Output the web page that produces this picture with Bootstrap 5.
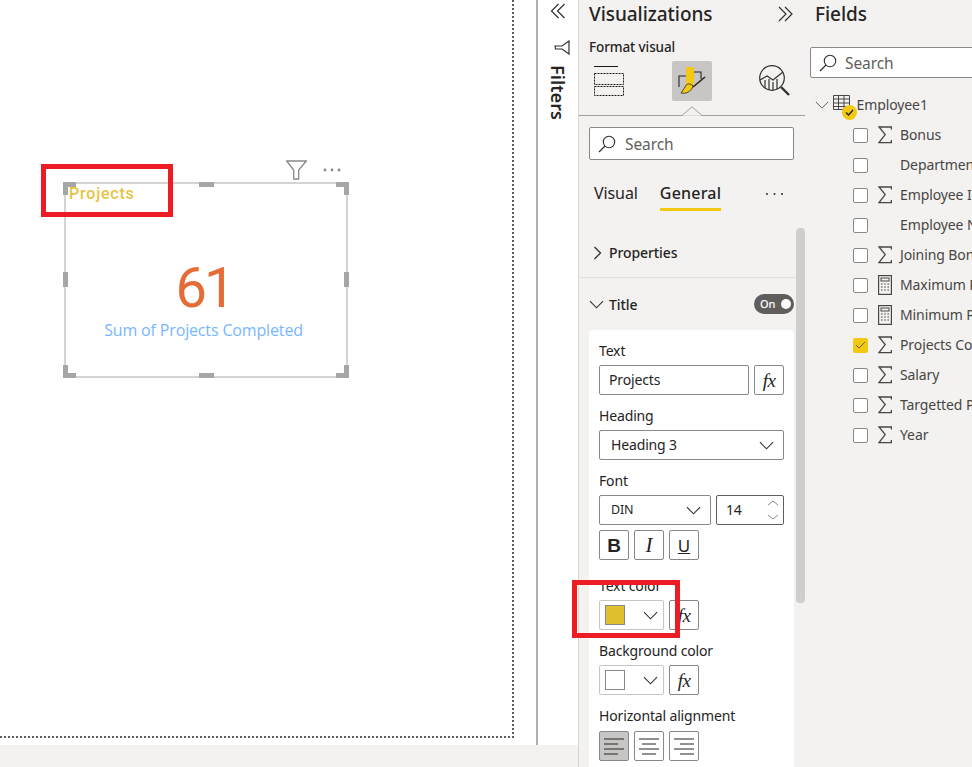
<!DOCTYPE html>
<html lang="en">
<head>
<meta charset="utf-8">
<title>Power BI format visual</title>
<link href="https://cdn.jsdelivr.net/npm/bootstrap@5.3.0/dist/css/bootstrap.min.css" rel="stylesheet">
<style>
html,body{height:767px;overflow:hidden;background:#fff}
body{font-family:"Noto Sans","Open Sans","Liberation Sans",sans-serif;font-size:14px;color:#252423}
.pbi-root{width:972px;height:767px}
.pbi-left{width:578px}
.pbi-main{height:745px}
.pbi-canvas{width:536px;background:#fff;flex:none}
.pbi-page{position:absolute;left:0;top:0;width:514px;height:738px;border-right:2px dotted #605e5c;border-bottom:2px dotted #605e5c}
.pbi-foot{height:22px;background:#f3f2f1}
.pbi-filter{width:42px;border-left:2px solid #b3b0ad;background:#fff;padding-top:3px}
.pbi-filter-label{writing-mode:vertical-rl;font-size:18px;font-weight:600;line-height:20px;margin-top:10px;letter-spacing:.1px}
.pbi-viz{width:227px;flex:none;background:#f3f2f1;border-left:1px solid #d8d6d4;position:relative;overflow:hidden}
.pbi-viz>*{flex:none}
.pbi-fields{width:167px;flex:none;background:#f3f2f1;overflow:hidden}
.pbi-h{font-size:19px;font-weight:500;line-height:28px;height:28px;letter-spacing:-.05px}
.pbi-viz-head{padding:0 11px 0 10px}
.pbi-fmt{padding:0 10px;height:20px;line-height:20px;margin-top:9px;font-size:13.5px;font-weight:500;letter-spacing:-.1px}
.pbi-tabs{height:59px;border-bottom:1px solid #a19f9d;padding:4px 0 0 0;position:relative}
.pbi-tab-sel{width:40px;height:40px;background:#c8c6c4;border-radius:2px}
.pbi-caret{position:absolute;left:102px;bottom:-1px;display:block}
.pbi-search{width:auto;height:33px;padding:0 8px!important;border:1px solid #8a8886;border-radius:2px;background:#fff;font-size:15.5px;color:#605e5c;line-height:1;letter-spacing:-.1px}
.pbi-search span{padding-top:2px}
.pbi-search-viz{margin:11px 11px 0 10px;gap:9px}
.pbi-subtabs{height:33px;margin-top:18px;padding:0 11px 0 15px;font-size:16px;line-height:30px;letter-spacing:-.1px}
.pbi-subtab-on{height:33px;border-bottom:3px solid #f2c811;font-weight:500;letter-spacing:.2px}
.pbi-more{margin-top:14px;margin-right:10px}
.pbi-prop{height:50px;margin-top:17px;padding:0 10px;border-bottom:1px solid #e1dfdd;font-size:14px;font-weight:500;letter-spacing:-.1px}
.pbi-title-row{height:52px;padding:0 11px 0 10px;font-size:14px;font-weight:500;letter-spacing:-.1px}
.pbi-toggle{width:40px;height:20px;background:#605e5c;border-radius:10px;color:#fff;font-size:11px;padding:0 3px 0 6px}
.pbi-knob{width:10px;height:10px;border-radius:50%;background:#fff}
.pbi-panel{margin:0 11px 0 10px;background:#fff;border-radius:4px 4px 0 0;padding:11px 10px 0 10px;height:450px}
.pbi-lbl{height:20px;line-height:20px;font-size:14px;margin-bottom:4px;letter-spacing:-.15px}
.pbi-grp{margin-bottom:11px}
.pbi-ctl{width:auto;height:30px;border:1px solid #8a8886;border-radius:2px;background:#fff;font-size:14px;padding:0 9px!important;line-height:1;color:#252423;letter-spacing:-.15px}
.pbi-ctl-soft{border-color:#c8c6c4;padding:0 5px 0 5px!important}
.pbi-sq{width:30px;height:30px;padding:0;border:1px solid #8a8886;border-radius:2px;background:#fff;color:#252423;line-height:1;flex:none}
.pbi-sq.pbi-on{background:#c8c6c4}
.pbi-fx{font-family:"Liberation Serif",serif;font-style:italic;font-size:19px;letter-spacing:-.5px}
.pbi-swatch{width:20px;height:20px;border:1px solid #8a8886}
.pbi-sb{position:absolute;left:217px;top:228px;width:9px;height:375px;background:#cfcecd;border-radius:4px}
.pbi-visual{position:absolute;left:64px;top:182px;width:284px;height:196px;border:2px solid #d4d4d4}
.pbi-vtitle{position:absolute;left:3px;top:0;font-family:Roboto,sans-serif;font-size:16px;font-weight:500;color:#e8c33f;letter-spacing:.8px;line-height:20px}
.pbi-val{font-family:Roboto,sans-serif;font-weight:400;font-size:56px;line-height:56px;color:#e66c37;letter-spacing:-3px;margin:76px 4px 0 0}
.pbi-cap{font-size:16px;line-height:22px;color:#77b7ff;margin:3px 5px 0 0;letter-spacing:-.15px;font-family:"Open Sans",sans-serif}
.pbi-hd{position:absolute;background:#a6a6a6}
.pbi-vicons{position:absolute;left:286px;top:160px}
.pbi-red{position:absolute;border:5px solid #ed1c24;pointer-events:none}
.pbi-red1{left:41px;top:164px;width:132px;height:53px}
.pbi-red2{left:572px;top:580px;width:108px;height:58px}
.pbi-fsearch{margin:19px 0 0 5px;width:180px;height:31px;flex:none}
.pbi-tree{margin-top:12px;font-size:14px;line-height:20px;color:#484644;letter-spacing:-.1px}
.pbi-row{height:30px;padding-left:48px;white-space:nowrap}
.pbi-cb{width:15px;height:15px;border:1px solid #8a8886;border-radius:2px;background:#fff;flex:none}
.pbi-cb.pbi-on{background:#f2c811;border-color:#f2c811}
.pbi-ico{width:14px;margin-left:10px;margin-right:8px;flex:none;display:block}
.pbi-head{height:30px;padding-left:10px}
.pbi-tblbox{position:relative;width:25px;height:26px;margin-left:4px;flex:none}
.pbi-tick{position:absolute;left:9px;top:13px;width:15px;height:15px;border-radius:50%;background:#f2c811}
</style>
</head>
<body>
<svg width="0" height="0" class="d-block position-absolute">
<symbol id="s-sigma" viewBox="0 0 14 18"><path d="M13.4 3.6V1H1l6.2 7.6L1 16.6h12.4V14" fill="none" stroke="#484644" stroke-width="1.3"/></symbol>
<symbol id="s-calc" viewBox="0 0 14 20"><rect x=".6" y=".6" width="12.8" height="18.8" fill="none" stroke="#484644" stroke-width="1.2"/><rect x="3" y="3" width="8" height="3" fill="none" stroke="#484644"/><path d="M3 9h1.6M6.2 9h1.6M9.4 9H11M3 12h1.6M6.2 12h1.6M9.4 12H11M3 15h1.6M6.2 15h1.6M9.4 15H11" stroke="#484644" stroke-width="1.2"/></symbol>
<symbol id="s-mag" viewBox="0 0 18 18"><circle cx="11" cy="7" r="5.7" fill="none" stroke="#323130" stroke-width="1.1"/><path d="M7 11 1 17" stroke="#323130" stroke-width="1.2"/></symbol>
<symbol id="s-chev" viewBox="0 0 16 9"><path d="M1 1l7 7 7-7" fill="none" stroke="#323130" stroke-width="1.2"/></symbol>
</svg>

<div class="pbi-root d-flex">
  <div class="pbi-left d-flex flex-column">
    <div class="pbi-main d-flex">
      <div class="pbi-canvas position-relative">
        <div class="pbi-page"></div>
        <div class="pbi-vicons d-flex align-items-center gap-3">
          <svg width="21" height="20" viewBox="0 0 21 20"><path d="M.7 1h19.6l-7.6 9v9h-5v-9z" fill="none" stroke="#8a8886" stroke-width="1.3"/></svg>
          <svg width="18" height="4" viewBox="0 0 18 4"><circle cx="2" cy="2" r="1.4" fill="#8a8886"/><circle cx="9" cy="2" r="1.4" fill="#8a8886"/><circle cx="16" cy="2" r="1.4" fill="#8a8886"/></svg>
        </div>
        <div class="pbi-visual text-center">
          <div class="pbi-vtitle">Projects</div>
          <div class="pbi-val">61</div>
          <div class="pbi-cap">Sum of Projects Completed</div>
          <span class="pbi-hd" style="left:-3px;top:-2px;width:13px;height:5px"></span><span class="pbi-hd" style="left:-3px;top:-2px;width:5px;height:13px"></span>
          <span class="pbi-hd" style="right:-3px;top:-2px;width:13px;height:5px"></span><span class="pbi-hd" style="right:-3px;top:-2px;width:5px;height:13px"></span>
          <span class="pbi-hd" style="left:-3px;bottom:-2px;width:13px;height:5px"></span><span class="pbi-hd" style="left:-3px;bottom:-2px;width:5px;height:13px"></span>
          <span class="pbi-hd" style="right:-3px;bottom:-2px;width:13px;height:5px"></span><span class="pbi-hd" style="right:-3px;bottom:-2px;width:5px;height:13px"></span>
          <span class="pbi-hd" style="left:133px;top:-2px;width:15px;height:5px"></span><span class="pbi-hd" style="left:133px;bottom:-2px;width:15px;height:5px"></span>
          <span class="pbi-hd" style="left:-3px;top:88px;width:5px;height:15px"></span><span class="pbi-hd" style="right:-3px;top:88px;width:5px;height:15px"></span>
        </div>
      </div>
      <div class="pbi-filter d-flex flex-column align-items-center flex-grow-1">
        <svg width="16" height="16" viewBox="0 0 16 16"><path d="M15 1 8 8l7 7M9 1 2 8l7 7" transform="translate(-.5 0)" fill="none" stroke="#323130" stroke-width="1.2"/></svg>
        <svg class="ms-2" style="margin-top:21px" width="16" height="15" viewBox="0 0 16 15"><path d="M15 1v13l-7-5H1.500L1 6h7z" fill="none" stroke="#323130" stroke-width="1.2"/></svg>
        <div class="pbi-filter-label">Filters</div>
      </div>
    </div>
    <div class="pbi-foot"></div>
  </div>

  <div class="pbi-viz d-flex flex-column">
    <div class="pbi-viz-head d-flex justify-content-between align-items-center pbi-h">
      <span>Visualizations</span>
      <svg width="16" height="16" viewBox="0 0 16 16"><path d="M1 1l7 7-7 7M7 1l7 7-7 7" fill="none" stroke="#323130" stroke-width="1.2"/></svg>
    </div>
    <div class="pbi-fmt">Format visual</div>
    <div class="pbi-tabs d-flex justify-content-between align-items-start">
      <svg class="mt-1" style="margin-left:15px" width="31" height="32" viewBox="0 0 31 32"><path d="M0 1.500h24" stroke="#1b1a19" stroke-width="1"/><rect x=".5" y="8.500" width="29" height="11" fill="none" stroke="#1b1a19" stroke-dasharray="2 1"/><rect x=".5" y="21.500" width="29" height="9" fill="none" stroke="#1b1a19" stroke-dasharray="2 1"/></svg>
      <div class="pbi-tab-sel d-flex align-items-center justify-content-center">
        <svg width="28" height="30" viewBox="0 0 28 30"><rect x="8" y="1" width="8" height="18" fill="#f2c811"/><path d="M1 21V10h7M16 6h7v7" fill="none" stroke="#252423" stroke-width="1.1"/><path d="M27 11 15 21" stroke="#252423" stroke-width="1.6"/><path d="M14 19c-3-2-6-1-7 2-1 2-3 4-4 6 5 1 10-1 12-7z" fill="#f2c811" stroke="#252423" stroke-width=".8"/></svg>
      </div>
      <svg class="mt-1" style="margin-right:15px" width="32" height="31" viewBox="0 0 32 31"><circle cx="14" cy="13" r="12.300" fill="none" stroke="#323130" stroke-width="1.2"/><path d="M2 15l7-4 6 4 10-8" fill="none" stroke="#323130" stroke-width="1.2"/><path d="M7 15v8M11 14v11M15 17v8M19 14v10" stroke="#323130" stroke-width="1.2"/><path d="M23 22l8 8" stroke="#323130" stroke-width="2.4"/></svg>
      <svg class="pbi-caret" width="22" height="10" viewBox="0 0 22 10"><path d="M0 9.500h1L11 .8 21 9.500h1" fill="#f3f2f1" stroke="#a19f9d"/><path d="M2 10h18v-.5H2z" fill="#f3f2f1"/></svg>
    </div>
    <div class="pbi-search pbi-search-viz d-flex align-items-center form-control">
      <svg width="18" height="18"><use href="#s-mag"/></svg><span>Search</span>
    </div>
    <div class="pbi-subtabs d-flex justify-content-between">
      <div class="d-flex gap-4"><span style="margin-right:-2px">Visual</span><span class="pbi-subtab-on">General</span></div>
      <svg class="pbi-more" width="19" height="4" viewBox="0 0 19 4"><circle cx="2" cy="2" r="1" fill="#323130"/><circle cx="9.500" cy="2" r="1" fill="#323130"/><circle cx="17" cy="2" r="1" fill="#323130"/></svg>
    </div>
    <div class="pbi-prop d-flex align-items-center" style="gap:6px">
      <svg width="10" height="14" viewBox="0 0 10 14" class="ms-1"><path d="M1.500 1l6 6-6 6" fill="none" stroke="#323130" stroke-width="1.300"/></svg><span>Properties</span>
    </div>
    <div class="pbi-title-row d-flex justify-content-between align-items-center">
      <div class="d-flex align-items-center" style="gap:5px">
        <svg width="15" height="9"><use href="#s-chev"/></svg><span>Title</span>
      </div>
      <div class="pbi-toggle d-flex justify-content-between align-items-center"><span>On</span><span class="pbi-knob"></span></div>
    </div>
    <div class="pbi-panel">
      <div class="pbi-grp">
        <div class="pbi-lbl">Text</div>
        <div class="d-flex" style="gap:5px">
          <div class="pbi-ctl form-control d-flex align-items-center flex-grow-1">Projects</div>
          <button class="btn pbi-sq pbi-fx" type="button">fx</button>
        </div>
      </div>
      <div class="pbi-grp">
        <div class="pbi-lbl">Heading</div>
        <div class="pbi-ctl form-control d-flex align-items-center justify-content-between"><span style="margin-left:2px">Heading 3</span><svg width="15" height="9"><use href="#s-chev"/></svg></div>
      </div>
      <div>
        <div class="pbi-lbl">Font</div>
        <div class="d-flex" style="gap:5px">
          <div class="pbi-ctl form-control d-flex align-items-center justify-content-between" style="width:112px;flex:none;font-size:12.500px"><span style="margin-left:2px">DIN</span><svg width="15" height="9"><use href="#s-chev"/></svg></div>
          <div class="pbi-ctl form-control d-flex align-items-center justify-content-between flex-grow-1" style="border-color:#605e5c"><span>14</span>
            <svg width="12" height="22" viewBox="0 0 12 22" style="margin-right:-5px"><path d="M1 6l5-4 5 4M1 16l5 4 5-4" fill="none" stroke="#8a8886"/></svg>
          </div>
        </div>
        <div class="d-flex" style="gap:5px;margin-top:5px">
          <button class="btn pbi-sq fw-bold" style="font-size:19px;font-family:'Liberation Sans',sans-serif" type="button">B</button>
          <button class="btn pbi-sq" style="font-family:'Liberation Serif',serif;font-style:italic;font-size:21px" type="button">I</button>
          <button class="btn pbi-sq text-decoration-underline" style="font-size:17px" type="button">U</button>
        </div>
      </div>
      <div class="pbi-grp" style="margin-top:16px">
        <div class="pbi-lbl">Text color</div>
        <div class="d-flex" style="gap:5px">
          <div class="pbi-ctl pbi-ctl-soft form-control d-flex align-items-center justify-content-between" style="width:65px"><span class="pbi-swatch" style="background:#e0c02e"></span><svg width="15" height="9"><use href="#s-chev"/></svg></div>
          <button class="btn pbi-sq pbi-fx" type="button">fx</button>
        </div>
      </div>
      <div class="pbi-grp">
        <div class="pbi-lbl">Background color</div>
        <div class="d-flex" style="gap:5px">
          <div class="pbi-ctl pbi-ctl-soft form-control d-flex align-items-center justify-content-between" style="width:65px"><span class="pbi-swatch" style="background:#fff"></span><svg width="15" height="9"><use href="#s-chev"/></svg></div>
          <button class="btn pbi-sq pbi-fx" type="button">fx</button>
        </div>
      </div>
      <div>
        <div class="pbi-lbl" style="margin-bottom:5px">Horizontal alignment</div>
        <div class="d-flex" style="gap:5px">
          <button class="btn pbi-sq pbi-on d-flex align-items-center justify-content-center" type="button" aria-label="Left"><svg width="20" height="17" viewBox="0 0 20 17"><path d="M0 1h20M0 6h14M0 11h20M0 16h14" stroke="#252423"/></svg></button>
          <button class="btn pbi-sq d-flex align-items-center justify-content-center" type="button" aria-label="Center"><svg width="20" height="17" viewBox="0 0 20 17"><path d="M0 1h20M3 6h14M0 11h20M3 16h14" stroke="#252423"/></svg></button>
          <button class="btn pbi-sq d-flex align-items-center justify-content-center" type="button" aria-label="Right"><svg width="20" height="17" viewBox="0 0 20 17"><path d="M0 1h20M6 6h14M0 11h20M6 16h14" stroke="#252423"/></svg></button>
        </div>
      </div>
    </div>
    <div class="pbi-sb"></div>
  </div>

  <div class="pbi-fields d-flex flex-column">
    <div class="pbi-h" style="padding-left:10px">Fields</div>
    <div class="pbi-search pbi-fsearch d-flex align-items-center gap-2 form-control">
      <svg width="18" height="18"><use href="#s-mag"/></svg><span>Search</span>
    </div>
    <div class="pbi-tree">
      <div class="pbi-head d-flex align-items-center">
        <svg width="14" height="8" viewBox="0 0 16 9"><path d="M1 1l7 7 7-7" fill="none" stroke="#605e5c" stroke-width="1.1"/></svg>
        <span class="pbi-tblbox">
          <svg width="17" height="15" viewBox="0 0 17 15" style="position:absolute;left:0;top:3px"><path d="M.5.5h16v14H.5zM.5 4h16M.5 8h16M.5 11.500h16M5.500 0v15M11 0v15" fill="none" stroke="#484644"/></svg>
          <span class="pbi-tick d-flex align-items-center justify-content-center"><svg width="9" height="7" viewBox="0 0 9 7"><path d="M1 3.500 3.500 6 8 1" fill="none" stroke="#252423" stroke-width="1.4"/></svg></span>
        </span>
        <span style="margin-left:-1.500px">Employee1</span>
      </div>
      <div class="pbi-row d-flex align-items-center"><span class="pbi-cb"></span><svg class="pbi-ico" height="18"><use href="#s-sigma"/></svg><span>Bonus</span></div>
      <div class="pbi-row d-flex align-items-center"><span class="pbi-cb"></span><span class="pbi-ico"></span><span>Department</span></div>
      <div class="pbi-row d-flex align-items-center"><span class="pbi-cb"></span><svg class="pbi-ico" height="18"><use href="#s-sigma"/></svg><span>Employee ID</span></div>
      <div class="pbi-row d-flex align-items-center"><span class="pbi-cb"></span><span class="pbi-ico"></span><span>Employee Name</span></div>
      <div class="pbi-row d-flex align-items-center"><span class="pbi-cb"></span><svg class="pbi-ico" height="18"><use href="#s-sigma"/></svg><span>Joining Bonus</span></div>
      <div class="pbi-row d-flex align-items-center"><span class="pbi-cb"></span><svg class="pbi-ico" height="20"><use href="#s-calc"/></svg><span>Maximum Projects</span></div>
      <div class="pbi-row d-flex align-items-center"><span class="pbi-cb"></span><svg class="pbi-ico" height="20"><use href="#s-calc"/></svg><span>Minimum Projects</span></div>
      <div class="pbi-row d-flex align-items-center"><span class="pbi-cb pbi-on d-flex align-items-center justify-content-center"><svg width="11" height="8" viewBox="0 0 11 8"><path d="M1 4l3 3 6-6" fill="none" stroke="#605e5c"/></svg></span><svg class="pbi-ico" height="18"><use href="#s-sigma"/></svg><span>Projects Completed</span></div>
      <div class="pbi-row d-flex align-items-center"><span class="pbi-cb"></span><svg class="pbi-ico" height="18"><use href="#s-sigma"/></svg><span>Salary</span></div>
      <div class="pbi-row d-flex align-items-center"><span class="pbi-cb"></span><svg class="pbi-ico" height="18"><use href="#s-sigma"/></svg><span>Targetted Projects</span></div>
      <div class="pbi-row d-flex align-items-center"><span class="pbi-cb"></span><svg class="pbi-ico" height="18"><use href="#s-sigma"/></svg><span>Year</span></div>
    </div>
  </div>
</div>
<div class="pbi-red pbi-red1"></div>
<div class="pbi-red pbi-red2"></div>
<script src="https://cdn.jsdelivr.net/npm/bootstrap@5.3.0/dist/js/bootstrap.bundle.min.js"></script>
</body>
</html>
